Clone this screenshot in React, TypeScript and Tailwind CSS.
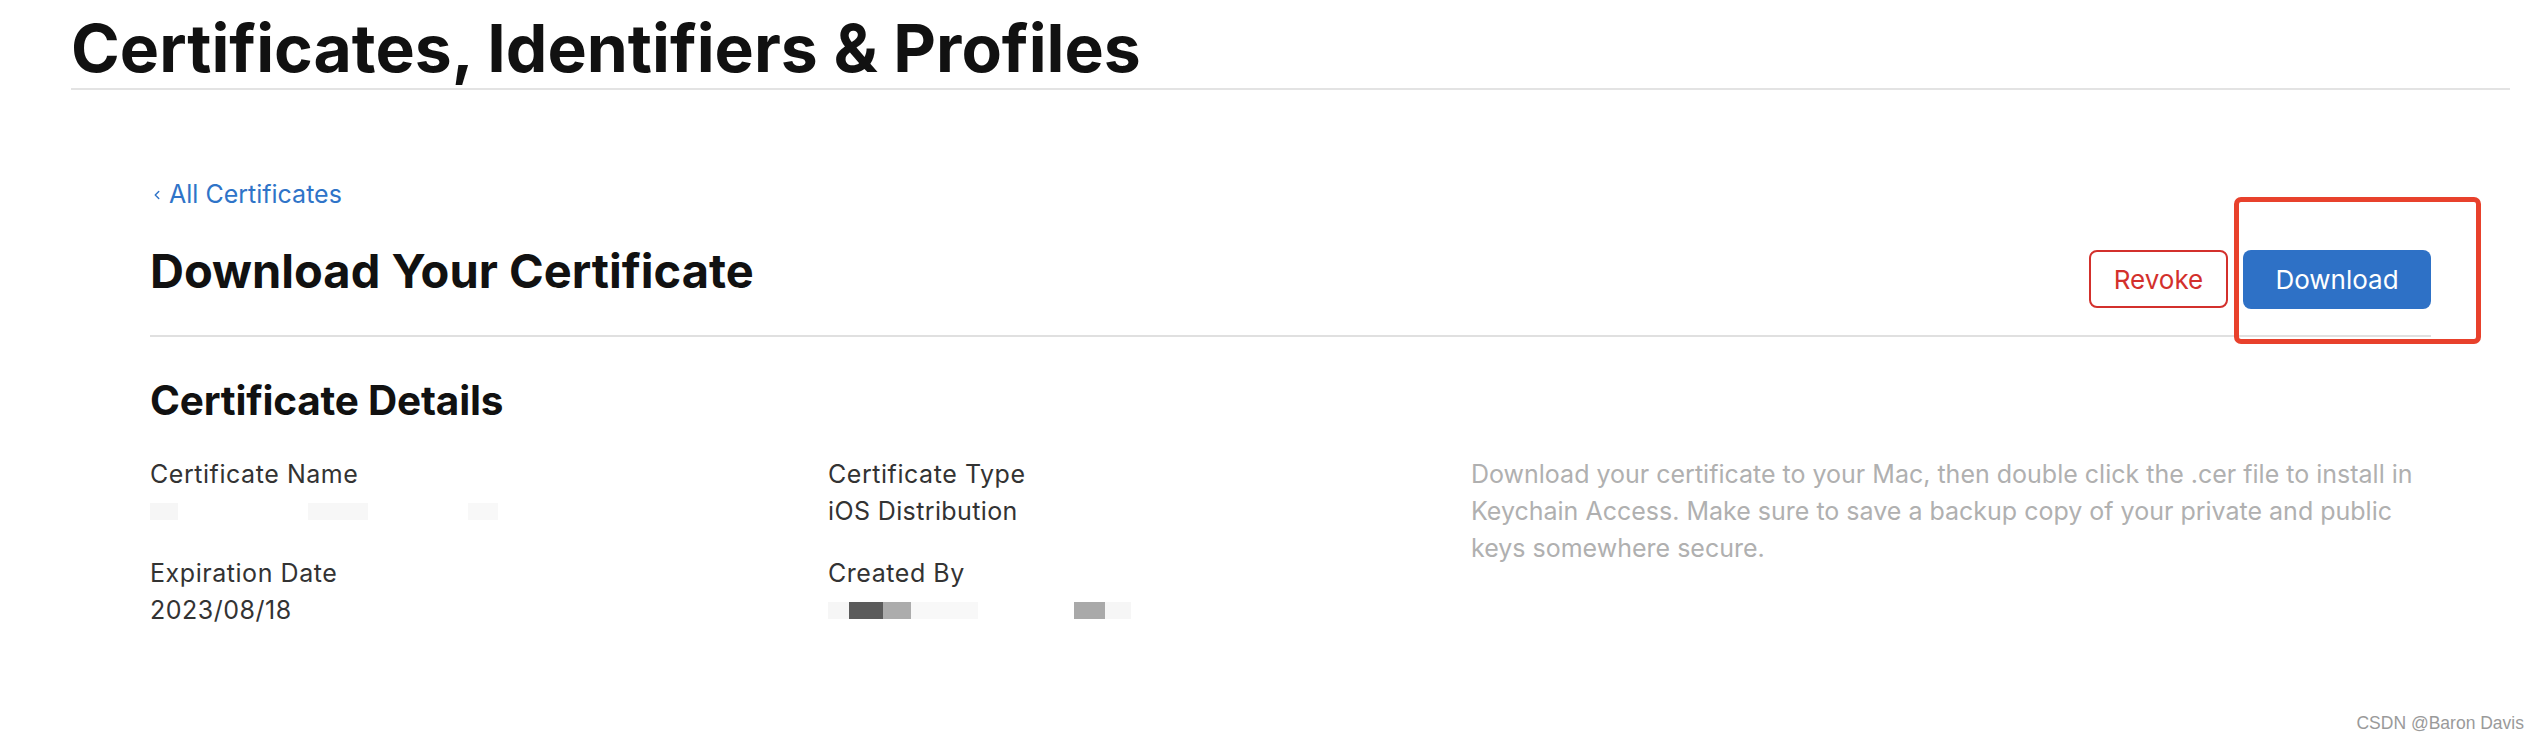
import { ChevronLeft } from 'lucide-react'

// blurred-out values from the source screenshot, drawn as soft blocks
function Redacted({ blocks }: { blocks: { w: number; c: string }[] }) {
  return (
    <div className="flex h-[37px] items-center">
      {blocks.map((b, i) => (
        <span key={i} className="h-[17px] blur-[0.5px]" style={{ width: b.w, backgroundColor: b.c }} />
      ))}
    </div>
  )
}

function Field({ label, children }: { label: string; children: React.ReactNode }) {
  return (
    <div>
      <p className="text-[25px] leading-[37px] tracking-[0.022em] text-[#333]">{label}</p>
      {children}
    </div>
  )
}

export default function App() {
  return (
    <div className="relative h-[742px] w-[2540px] overflow-hidden bg-white font-['Inter',sans-serif] text-[#111]">
      <header className="ml-[71px] w-[2439px] pt-[15px]">
        <h1 className="border-b-2 border-[#e3e3e3] pb-[7px] text-[66px] leading-[66px] font-bold">
          Certificates, Identifiers &amp; Profiles
        </h1>
      </header>

      <main className="pl-[150px] pr-[109px]">
        <a href="#" className="mt-[92px] flex items-center gap-[5px] text-[25px] leading-[25px] text-[#2f74c8]">
          <ChevronLeft className="h-[16px] w-[14px]" strokeWidth={2.5} />
          All Certificates
        </a>

        <div className="mt-[43px] flex items-start justify-between border-b-2 border-[#e0e0e0] pb-[26px]">
          <h2 className="-mt-[3px] text-[47px] leading-[47px] font-bold">Download Your Certificate</h2>
          <div className="flex gap-[15px]">
            <button className="h-[58px] w-[139px] rounded-[8px] border-2 border-[#d3302c] text-[26px] text-[#d3302c]">
              Revoke
            </button>
            <button className="h-[59px] w-[188px] rounded-[8px] bg-[#2e71c6] text-[26px] text-white">Download</button>
          </div>
        </div>

        <h3 className="mt-[43px] text-[40.5px] leading-[41px] font-bold tracking-[-0.005em]">Certificate Details</h3>

        <div className="mt-[35px] flex">
          <div className="flex w-[678px] flex-col gap-[25px]">
            <Field label="Certificate Name">
              <Redacted
                blocks={[
                  { w: 28, c: '#f6f6f6' },
                  { w: 130, c: '#fff' },
                  { w: 60, c: '#f7f7f7' },
                  { w: 100, c: '#fff' },
                  { w: 30, c: '#f8f8f8' },
                ]}
              />
            </Field>
            <Field label="Expiration Date">
              <p className="text-[25px] leading-[37px] tracking-[0.02em] text-[#333]">2023/08/18</p>
            </Field>
          </div>

          <div className="flex w-[643px] flex-col gap-[25px]">
            <Field label="Certificate Type">
              <p className="text-[25px] leading-[37px] tracking-[0.015em] text-[#333]">iOS Distribution</p>
            </Field>
            <Field label="Created By">
              <Redacted
                blocks={[
                  { w: 21, c: '#f6f6f6' },
                  { w: 34, c: '#5b5b5b' },
                  { w: 28, c: '#acacac' },
                  { w: 67, c: '#f8f8f8' },
                  { w: 96, c: '#fff' },
                  { w: 31, c: '#a9a9a9' },
                  { w: 26, c: '#f6f6f6' },
                ]}
              />
            </Field>
          </div>

          <p className="w-[960px] text-[25px] leading-[37px] text-[#b0b0b0]">
            Download your certificate to your Mac, then double click the .cer file to install in Keychain Access. Make
            sure to save a backup copy of your private and public keys somewhere secure.
          </p>
        </div>
      </main>

      {/* red annotation box around the Download button */}
      <div className="absolute left-[2234px] top-[197px] h-[147px] w-[247px] rounded-[7px] border-[5px] border-[#e8412c]" />

      <span className="absolute right-[16px] bottom-[6px] font-['Liberation_Sans',sans-serif] text-[17.5px] text-[#9a9a9a]">
        CSDN @Baron Davis
      </span>
    </div>
  )
}
